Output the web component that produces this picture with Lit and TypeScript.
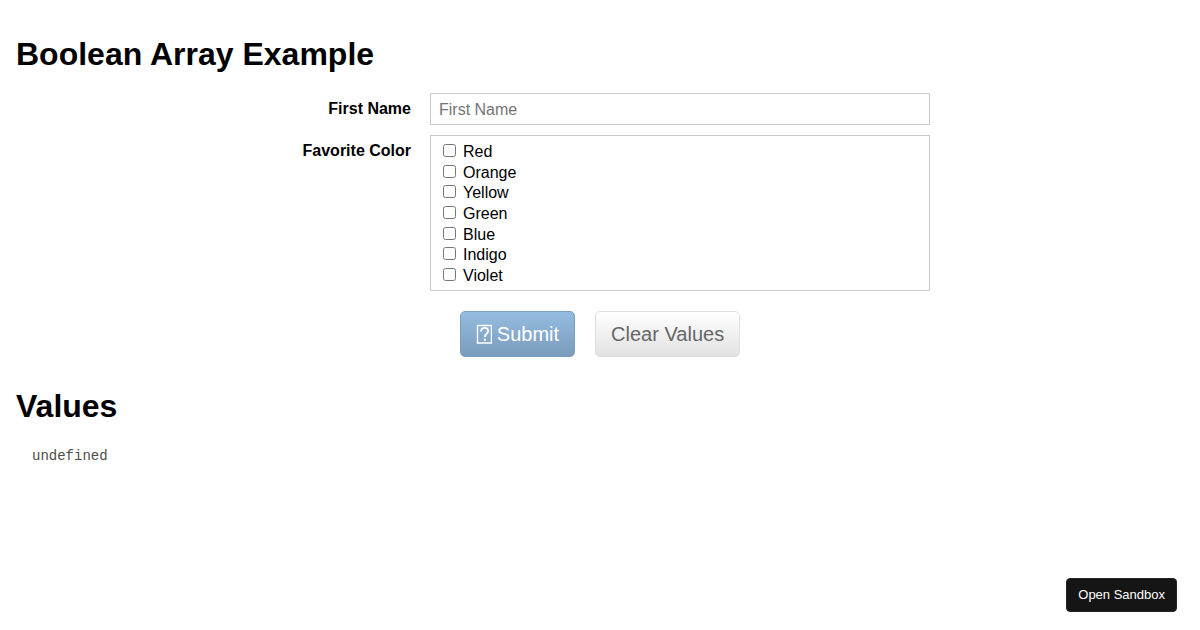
import { LitElement, html, css } from "lit";
import { customElement, state } from "lit/decorators.js";

const COLORS = ["Red", "Orange", "Yellow", "Green", "Blue", "Indigo", "Violet"];

@customElement("app-root")
export class AppRoot extends LitElement {
  @state() private values = "undefined";

  static styles = css`
    :host {
      display: block;
      box-sizing: border-box;
      min-height: 100vh;
      padding: 32px 16px 16px;
      background: #fff;
      color: #000;
      font: 16px/20px Helvetica, "Liberation Sans", Arial, sans-serif;
    }
    * {
      box-sizing: border-box;
    }
    .title {
      margin: 0;
      font-size: 32px;
      line-height: 45px;
    }
    .form {
      display: grid;
      gap: 10px;
      max-width: 660px;
      margin: 16px auto 0;
    }
    .row {
      display: grid;
      grid-template-columns: 141px minmax(0, 1fr);
      column-gap: 19px;
      align-items: start;
    }
    .label {
      padding-top: 6px;
      text-align: right;
      font-weight: bold;
    }
    .input {
      width: 100%;
      height: 32px;
      padding: 2px 8px 0;
      border: 1px solid #ccc;
      border-radius: 0;
      background: #fff;
      font: inherit;
    }
    .input::placeholder {
      color: #757575;
    }
    .options {
      display: grid;
      grid-auto-rows: 1fr;
      min-height: 156px;
      padding: 6px 12px 4px;
      border: 1px solid #ccc;
    }
    .option {
      display: flex;
      align-items: center;
      gap: 7px;
      justify-self: start;
    }
    .check {
      width: 13px;
      height: 13px;
      margin: 0 0 3px;
    }
    .actions {
      display: flex;
      justify-content: center;
      gap: 20px;
      margin-top: 10px;
    }
    .button {
      display: flex;
      align-items: center;
      gap: 5px;
      height: 46px;
      padding: 0 15px;
      border: 1px solid #e0e0e0;
      border-radius: 5px;
      background: linear-gradient(#fff, #e2e2e2);
      color: #666;
      font: inherit;
      font-size: 20px;
      line-height: 24px;
    }
    .primary {
      border-color: #7b9cbc;
      background: linear-gradient(#94bce0, #7b9cbc);
      color: #fff;
    }
    .icon {
      width: 16px;
      height: 20px;
    }
    .values {
      margin-top: 27px;
    }
    .output {
      margin: 19px 16px;
      color: #4d4d4c;
      font: 14px/16px Courier, "Liberation Mono", "Courier New", monospace;
    }
    .sandbox {
      position: fixed;
      right: 23px;
      bottom: 18px;
      height: 34px;
      padding: 0 11px;
      border: 1px solid #242424;
      border-radius: 4px;
      background: #151515;
      color: #fff;
      font: inherit;
      font-size: 13px;
      line-height: 16px;
    }
  `;

  private submit(event: SubmitEvent) {
    event.preventDefault();
    const data = new FormData(event.target as HTMLFormElement);
    this.values = JSON.stringify(
      { firstName: data.get("firstName"), colors: data.getAll("color") },
      null,
      2
    );
  }

  private clear() {
    this.values = "undefined";
  }

  render() {
    return html`
      <main>
        <h1 class="title">Boolean Array Example</h1>
        <form class="form" @submit=${this.submit} @reset=${this.clear}>
          <div class="row">
            <label class="label" for="first-name">First Name</label>
            <input class="input" id="first-name" name="firstName" type="text" placeholder="First Name" />
          </div>
          <div class="row" role="group" aria-labelledby="color-label">
            <span class="label" id="color-label">Favorite Color</span>
            <div class="options">
              ${COLORS.map(
                (color) => html`<label class="option"
                  ><input class="check" type="checkbox" name="color" value=${color} />${color}</label
                >`
              )}
            </div>
          </div>
          <div class="actions">
            <button class="button primary" type="submit">
              <svg class="icon" viewBox="0 0 16 20" fill="none" stroke="currentColor" aria-hidden="true">
                <path d="M1.5 1.5h14v17.5h-14z" stroke-width="1.4" />
                <path d="M5 7.6c0-4.8 7.2-4.8 7.2-.8 0 3-3.4 3.2-3.4 6.2" stroke-width="1.8" />
                <path d="M8.8 14.6v2.2" stroke-width="2" />
              </svg>
              Submit
            </button>
            <button class="button" type="reset">Clear Values</button>
          </div>
        </form>
        <h1 class="title values">Values</h1>
        <pre class="output">${this.values}</pre>
      </main>
      <button class="sandbox" type="button">Open Sandbox</button>
    `;
  }
}
